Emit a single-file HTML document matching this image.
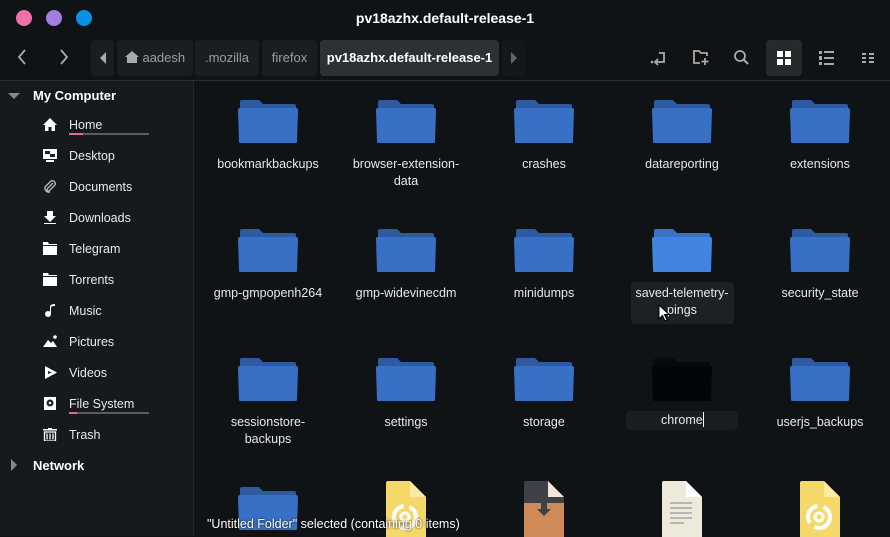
<!DOCTYPE html>
<html><head><meta charset="utf-8">
<style>
*{margin:0;padding:0;box-sizing:border-box}
body{width:890px;height:536px;background:#101315;font-family:"Liberation Sans","DejaVu Sans",sans-serif;color:#e6e8ea;overflow:hidden;position:relative;font-size:12.5px}
.abs{position:absolute}
.title{top:10px;left:0;width:890px;text-align:center;font-weight:bold;font-size:14px;color:#fff}
.dot{width:16px;height:16px;border-radius:50%;top:10px}
.crumb{top:40px;height:36px;background:#1b1e21;border-radius:4px;color:#9a9ea2;font-size:13px;line-height:36px;text-align:center}
.side{left:0;top:81px;width:194px;height:455px;background:#161a1c;border-right:1px solid #24272a}
.si{left:69px;font-size:12.5px;color:#e8eaec}
.ic{left:43px;width:14px;height:13px}
.ul{left:69px;width:80px;height:2px;background:#5a5d60}
.ul i{display:block;width:14px;height:2px;background:#e668a0}
.lbl{width:130px;text-align:center;font-size:12.5px;color:#e6e8ea;line-height:17px}
</style></head><body>
<div class="abs dot" style="left:16px;background:#ee71a9"></div>
<div class="abs dot" style="left:46px;background:#a27fdf"></div>
<div class="abs dot" style="left:76px;background:#0a8fe6"></div>
<div class="abs title">pv18azhx.default-release-1</div>

<svg class="abs" style="left:14px;top:48px" width="16" height="18"><path d="M11 2 L5 9 L11 16" stroke="#aaa" stroke-width="1.8" fill="none"/></svg>
<svg class="abs" style="left:56px;top:48px" width="16" height="18"><path d="M5 2 L11 9 L5 16" stroke="#aaa" stroke-width="1.8" fill="none"/></svg>

<div class="abs crumb" style="left:91px;width:23px"><svg width="8" height="12" style="margin-top:12px"><path d="M7 0 L1 6 L7 12Z" fill="#aaa"/></svg></div>
<div class="abs crumb" style="left:117px;width:76px"><svg width="14" height="12" style="vertical-align:-1px"><path d="M7 0 L14 6 L12 6 L12 12 L2 12 L2 6 L0 6Z" fill="#aaa"/></svg> aadesh</div>
<div class="abs crumb" style="left:195px;width:64px">.mozilla</div>
<div class="abs crumb" style="left:262px;width:55px">firefox</div>
<div class="abs crumb" style="left:320px;width:179px;background:#2e3134;color:#fff;font-weight:bold">pv18azhx.default-release-1</div>
<div class="abs crumb" style="left:502px;width:23px;background:#15181a"><svg width="8" height="12" style="margin-top:12px"><path d="M1 0 L7 6 L1 12Z" fill="#666"/></svg></div>

<svg class="abs" style="left:650px;top:50px" width="16" height="16"><path d="M9 3 H14 V12 H6 M8 9 L5 12 L8 15" stroke="#aaa" stroke-width="1.8" fill="none"/><circle cx="2" cy="12" r="1.3" fill="#aaa"/></svg>
<svg class="abs" style="left:692px;top:49px" width="18" height="17"><path d="M8 14 H2 V2 H7 L9 4 H15 V7" stroke="#aaa" stroke-width="1.8" fill="none"/><path d="M13 9 V16 M9.5 12.5 H16.5" stroke="#aaa" stroke-width="1.8"/></svg>
<svg class="abs" style="left:733px;top:49px" width="17" height="17"><circle cx="7" cy="7" r="5" stroke="#aaa" stroke-width="1.8" fill="none"/><path d="M11 11 L15 15" stroke="#aaa" stroke-width="2"/></svg>
<div class="abs" style="left:766px;top:40px;width:36px;height:36px;background:#272a2d;border-radius:4px"></div>
<svg class="abs" style="left:777px;top:51px" width="14" height="14"><rect x="0" y="0" width="6" height="6" fill="#fff"/><rect x="8" y="0" width="6" height="6" fill="#fff"/><rect x="0" y="8" width="6" height="6" fill="#fff"/><rect x="8" y="8" width="6" height="6" fill="#fff"/></svg>
<svg class="abs" style="left:819px;top:51px" width="15" height="14"><rect x="0" y="0" width="3" height="3" fill="#aaa"/><rect x="0" y="5" width="3" height="4" fill="#aaa"/><rect x="0" y="11" width="3" height="3" fill="#aaa"/><rect x="5" y="0" width="10" height="2" fill="#aaa"/><rect x="5" y="6" width="10" height="2" fill="#aaa"/><rect x="5" y="12" width="10" height="2" fill="#aaa"/></svg>
<svg class="abs" style="left:862px;top:53px" width="13" height="11"><g fill="#aaa"><rect x="0" y="0" width="4" height="2"/><rect x="7" y="0" width="5" height="2"/><rect x="0" y="4" width="4" height="2"/><rect x="7" y="4" width="5" height="2"/><rect x="0" y="8" width="4" height="2"/><rect x="7" y="8" width="5" height="2"/></g></svg>
<div class="abs" style="left:0;top:80px;width:890px;height:1px;background:#2a2d30"></div>

<div class="abs side"></div>
<svg class="abs" style="left:8px;top:93px" width="12" height="7"><path d="M0 0 H12 L6 6Z" fill="#888"/></svg>
<div class="abs" style="left:33px;top:88px;font-weight:bold;font-size:13px;color:#fff">My Computer</div>
<svg class="abs" style="left:11px;top:459px" width="7" height="12"><path d="M0 0 L6 6 L0 12Z" fill="#888"/></svg>
<div class="abs" style="left:33px;top:458px;font-weight:bold;font-size:13px;color:#fff">Network</div>

<svg class="abs ic" style="top:118px"><path d="M7 0 L14 7 L12 7 L12 13 L8.5 13 L8.5 9 L5.5 9 L5.5 13 L2 13 L2 7 L0 7Z" fill="#fff"/></svg>
<div class="abs si" style="top:118px">Home</div><div class="abs ul" style="top:133px"><i></i></div>
<svg class="abs ic" style="top:149px"><rect x="0" y="0" width="14" height="10" fill="#fff"/><rect x="2" y="2" width="5" height="3" fill="#222"/><rect x="7" y="5" width="5" height="3" fill="#222"/><rect x="3" y="11" width="8" height="2" fill="#fff"/></svg>
<div class="abs si" style="top:149px">Desktop</div>
<svg class="abs ic" style="top:180px"><path d="M10 3 L4 9 A1.6 1.6 0 0 0 6 11 L12 5 A3 3 0 0 0 8 1 L2 7 A4 4 0 0 0 7 12" stroke="#bbb" stroke-width="1.3" fill="none"/></svg>
<div class="abs si" style="top:180px">Documents</div>
<svg class="abs ic" style="top:211px"><path d="M4 0 H10 V5 H13 L7 11 L1 5 H4Z" fill="#fff"/><rect x="1" y="12" width="12" height="1.5" fill="#fff"/></svg>
<div class="abs si" style="top:211px">Downloads</div>
<svg class="abs ic" style="top:242px"><path d="M0 0 H5 L6 2 H14 V13 H0Z" fill="#fff"/><rect x="0" y="3" width="14" height="1" fill="#222"/></svg>
<div class="abs si" style="top:242px">Telegram</div>
<svg class="abs ic" style="top:273px"><path d="M0 0 H5 L6 2 H14 V13 H0Z" fill="#fff"/><rect x="0" y="3" width="14" height="1" fill="#222"/></svg>
<div class="abs si" style="top:273px">Torrents</div>
<svg class="abs ic" style="top:304px"><circle cx="5" cy="10" r="3" fill="#fff"/><path d="M7 10 V2 Q8 0 12 0 V2 Q9 2 8 3 V10" fill="#fff"/></svg>
<div class="abs si" style="top:304px">Music</div>
<svg class="abs ic" style="top:335px"><path d="M0 12 L5 5 L8 8 L10 6 L14 12Z" fill="#fff"/><circle cx="12" cy="2" r="1.8" fill="#fff"/></svg>
<div class="abs si" style="top:335px">Pictures</div>
<svg class="abs ic" style="top:366px"><path d="M2 0 L14 6.5 L2 13Z" fill="#fff"/><path d="M5 5 L9 6.5 L5 8Z" fill="#222"/></svg>
<div class="abs si" style="top:366px">Videos</div>
<svg class="abs ic" style="top:397px"><rect x="1" y="0" width="12" height="13" fill="#fff"/><circle cx="7" cy="6" r="3.5" fill="#222"/><circle cx="7" cy="6" r="1.2" fill="#fff"/></svg>
<div class="abs si" style="top:397px">File System</div><div class="abs ul" style="top:412px"><i style="width:8px"></i></div>
<svg class="abs ic" style="top:428px"><rect x="0" y="1" width="14" height="1.5" fill="#fff"/><rect x="5" y="0" width="4" height="1.5" fill="#fff"/><path d="M1.5 4 H12.5 V13 H1.5Z M4 5.5 V11.5 M7 5.5 V11.5 M10 5.5 V11.5" stroke="#fff" stroke-width="1.3" fill="none"/></svg>
<div class="abs si" style="top:428px">Trash</div>

<svg width="0" height="0" style="position:absolute"><defs>
<g id="fold"><path d="M3 4 Q3 2 5 2 H22 L26 6 H57 Q59 6 59 8 V20 H3Z" fill="#2d5aa0"/><path d="M1 12 Q1 10 3 10 H59 Q61 10 61 12 L60 44 Q60 45 58 45 H4 Q2 45 2 44Z" fill="#3870c5"/></g>
<g id="foldL"><path d="M3 4 Q3 2 5 2 H22 L26 6 H57 Q59 6 59 8 V20 H3Z" fill="#3a72c8"/><path d="M1 12 Q1 10 3 10 H59 Q61 10 61 12 L60 44 Q60 45 58 45 H4 Q2 45 2 44Z" fill="#4285e0"/></g>
<g id="foldD"><path d="M3 4 Q3 2 5 2 H22 L26 6 H57 Q59 6 59 8 V20 H3Z" fill="#05080c"/><path d="M1 12 Q1 10 3 10 H59 Q61 10 61 12 L60 44 Q60 45 58 45 H4 Q2 45 2 44Z" fill="#02060b"/></g>
</defs></svg>

<svg class="abs" style="left:237px;top:98px" width="62" height="47"><use href="#fold"/></svg>
<svg class="abs" style="left:375px;top:98px" width="62" height="47"><use href="#fold"/></svg>
<svg class="abs" style="left:513px;top:98px" width="62" height="47"><use href="#fold"/></svg>
<svg class="abs" style="left:651px;top:98px" width="62" height="47"><use href="#fold"/></svg>
<svg class="abs" style="left:789px;top:98px" width="62" height="47"><use href="#fold"/></svg>
<svg class="abs" style="left:237px;top:227px" width="62" height="47"><use href="#fold"/></svg>
<svg class="abs" style="left:375px;top:227px" width="62" height="47"><use href="#fold"/></svg>
<svg class="abs" style="left:513px;top:227px" width="62" height="47"><use href="#fold"/></svg>
<svg class="abs" style="left:651px;top:227px" width="62" height="47"><use href="#foldL"/></svg>
<svg class="abs" style="left:789px;top:227px" width="62" height="47"><use href="#fold"/></svg>
<svg class="abs" style="left:237px;top:356px" width="62" height="47"><use href="#fold"/></svg>
<svg class="abs" style="left:375px;top:356px" width="62" height="47"><use href="#fold"/></svg>
<svg class="abs" style="left:513px;top:356px" width="62" height="47"><use href="#fold"/></svg>
<svg class="abs" style="left:651px;top:356px" width="62" height="47"><use href="#foldD"/></svg>
<svg class="abs" style="left:789px;top:356px" width="62" height="47"><use href="#fold"/></svg>
<svg class="abs" style="left:237px;top:485px" width="62" height="47"><use href="#fold"/></svg>

<div class="abs lbl" style="left:203px;top:156px">bookmarkbackups</div>
<div class="abs lbl" style="left:341px;top:156px">browser-extension-<br>data</div>
<div class="abs lbl" style="left:479px;top:156px">crashes</div>
<div class="abs lbl" style="left:617px;top:156px">datareporting</div>
<div class="abs lbl" style="left:755px;top:156px">extensions</div>
<div class="abs lbl" style="left:203px;top:285px">gmp-gmpopenh264</div>
<div class="abs lbl" style="left:341px;top:285px">gmp-widevinecdm</div>
<div class="abs lbl" style="left:479px;top:285px">minidumps</div>
<div class="abs" style="left:631px;top:282px;width:103px;height:42px;background:#1e2123;border-radius:4px"></div>
<div class="abs lbl" style="left:617px;top:285px">saved-telemetry-<br>pings</div>
<svg class="abs" style="left:658px;top:304px" width="12" height="18"><path d="M1 1 V15 L4.5 11.5 L7 17 L9 16 L6.5 10.5 L11 10.5Z" fill="#fff" stroke="#000" stroke-width="1"/></svg>
<div class="abs lbl" style="left:755px;top:285px">security_state</div>
<div class="abs lbl" style="left:203px;top:414px">sessionstore-<br>backups</div>
<div class="abs lbl" style="left:341px;top:414px">settings</div>
<div class="abs lbl" style="left:479px;top:414px">storage</div>
<div class="abs" style="left:626px;top:411px;width:112px;height:19px;background:#1b1e20;border-radius:4px"></div>
<div class="abs" style="left:661px;top:412px;font-size:12.5px">chrome<span style="display:inline-block;width:1px;height:15px;background:#fff;vertical-align:-3px"></span></div>
<div class="abs lbl" style="left:755px;top:414px">userjs_backups</div>

<svg class="abs" style="left:384px;top:481px" width="44" height="56"><path d="M2 2 Q2 0 4 0 H26 L42 16 V56 H2Z" fill="#f5d86a"/><path d="M26 0 V16 H42Z" fill="#fbe9a8"/><circle cx="21" cy="36" r="11" fill="none" stroke="#fff" stroke-width="4" stroke-dasharray="22 6"/><circle cx="21" cy="36" r="4" fill="none" stroke="#fff" stroke-width="3"/></svg>
<svg class="abs" style="left:522px;top:481px" width="44" height="56"><path d="M2 2 Q2 0 4 0 H26 L42 16 V56 H2Z" fill="#3c4148"/><rect x="2" y="22" width="40" height="34" fill="#d08a58"/><path d="M26 0 V16 H42Z" fill="#f2e6da"/><path d="M19 18 H25 V28 H29 L22 35 L15 28 H19Z" fill="#3c4148"/></svg>
<svg class="abs" style="left:660px;top:481px" width="44" height="56"><path d="M2 2 Q2 0 4 0 H26 L42 16 V56 H2Z" fill="#ede9db"/><path d="M26 0 V16 H42Z" fill="#fff"/><g stroke="#999" stroke-width="1.2"><path d="M10 22 H32 M10 27 H32 M10 32 H32 M10 37 H32 M10 42 H24"/></g></svg>
<svg class="abs" style="left:798px;top:481px" width="44" height="56"><path d="M2 2 Q2 0 4 0 H26 L42 16 V56 H2Z" fill="#f5d86a"/><path d="M26 0 V16 H42Z" fill="#fbe9a8"/><circle cx="21" cy="36" r="11" fill="none" stroke="#fff" stroke-width="4" stroke-dasharray="22 6"/><circle cx="21" cy="36" r="4" fill="none" stroke="#fff" stroke-width="3"/></svg>

<div class="abs" style="left:207px;top:517px;font-size:12.5px;color:#fff;text-shadow:0 0 2px #000">"Untitled Folder" selected (containing 0 items)</div>
</body></html>
